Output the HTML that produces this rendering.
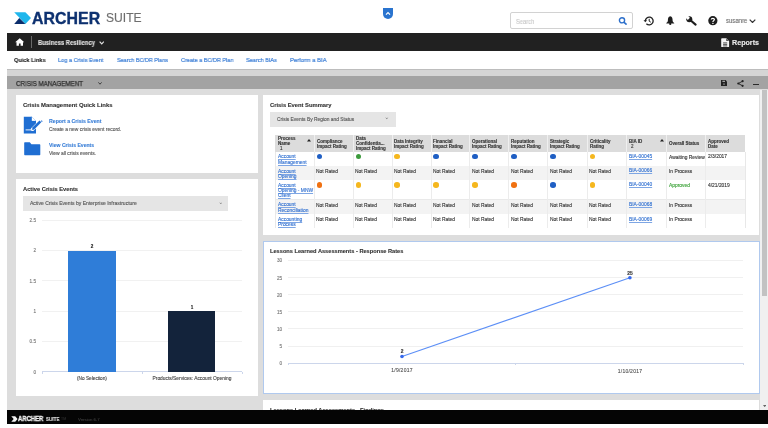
<!DOCTYPE html>
<html><head><meta charset="utf-8"><title>Archer Suite - Crisis Management</title>
<style>
html,body{margin:0;padding:0;}
body{width:768px;height:428px;overflow:hidden;position:relative;background:#fff;font-family:"Liberation Sans",sans-serif;}
.t{position:absolute;white-space:nowrap;line-height:1;will-change:transform;-webkit-text-stroke-width:0.12px;}
.r{position:absolute;}
</style></head><body>
<svg class="r" style="left:0;top:0" width="768" height="33" viewBox="0 0 768 33"><polygon points="14.2,12.2 25.4,12.2 31,18 25.4,24" fill="#1fb6ec"/><polygon points="14.2,24 25.4,24 19.3,18" fill="#0b2e6c"/></svg>
<div class="t" style="left:31.60px;top:11.07px;font-size:15.9px;color:#0d3170;font-weight:bold;letter-spacing:0.05px;-webkit-text-stroke:0.35px #0d3170;">ARCHER</div>
<div class="t" style="left:105.50px;top:12.49px;font-size:12.1px;color:#6e6e6e;">SUITE</div>
<svg class="r" style="left:383px;top:8px" width="10" height="11" viewBox="0 0 10 11"><path d="M0,0 H10 V6 A5,5 0 0 1 0,6 Z" fill="#2a74cf"/><path d="M3,6.6 L5,4.6 L7,6.6" stroke="#fff" stroke-width="1.2" fill="none"/></svg>
<div class="r" style="left:510px;top:12.3px;width:122.50px;height:16.40px;background:#fff;box-sizing:border-box;border:1px solid #d2d2d2;border-radius:2px;"></div>
<div class="t" style="left:515.50px;top:18.81px;font-size:6.4px;color:#c8c8c8;transform:scaleX(0.9);transform-origin:0 50%;">Search</div>
<svg class="r" style="left:618px;top:17px" width="10" height="8" viewBox="0 0 10 8"><circle cx="4" cy="3.3" r="2.6" stroke="#2c6fcb" stroke-width="1.4" fill="none"/><path d="M5.8,5.1 L8.6,7.6" stroke="#2c6fcb" stroke-width="1.6"/></svg>
<svg class="r" style="left:643.4px;top:15.6px" width="11" height="10" viewBox="0 0 11 10"><path d="M2.3,5 A3.9,3.9 0 1 1 3.4,7.7" stroke="#222" stroke-width="1.3" fill="none"/><path d="M0.5,4.2 L2.3,6.2 L4.1,4.2 Z" fill="#222"/><path d="M6.2,2.8 V5.2 L7.8,6.2" stroke="#222" stroke-width="1" fill="none"/></svg>
<svg class="r" style="left:666.3px;top:16.4px" width="8.5" height="9" viewBox="0 0 8.5 9"><path d="M4.25,0.3 C6.3,0.6 6.6,2.6 6.6,4.5 C6.6,5.6 7.4,6.4 8.2,7 V7.4 H0.3 V7 C1.1,6.4 1.9,5.6 1.9,4.5 C1.9,2.6 2.2,0.6 4.25,0.3 Z" fill="#1e1e1e"/><circle cx="4.25" cy="7.9" r="1.1" fill="#1e1e1e"/></svg>
<svg class="r" style="left:685.5px;top:15.6px" width="11.5" height="10" viewBox="0 0 11.5 10"><path d="M4.2,4.0 L9.6,8.6" stroke="#1e1e1e" stroke-width="2.1" stroke-linecap="round"/><circle cx="3.3" cy="3.3" r="3.0" fill="#1e1e1e"/><path d="M-0.5,1.6 L1.6,-0.5 L3.9,1.8 L1.8,3.9 Z" fill="#fff"/></svg>
<svg class="r" style="left:708.0px;top:15.9px" width="10" height="10" viewBox="0 0 10 10"><circle cx="4.85" cy="4.7" r="4.6" fill="#1e1e1e"/><path d="M3.3,3.6 C3.3,1.9 6.4,1.9 6.4,3.6 C6.4,4.6 4.9,4.7 4.9,5.9" stroke="#fff" stroke-width="1.2" fill="none"/><circle cx="4.9" cy="7.4" r="0.7" fill="#fff"/></svg>
<div class="t" style="left:726.30px;top:17.18px;font-size:7.2px;color:#666;-webkit-text-stroke:0.1px #666;transform:scaleX(0.83);transform-origin:0 50%;">susanre</div>
<svg class="r" style="left:749.3px;top:18.6px" width="7" height="4.5" viewBox="0 0 7 4.5"><path d="M0.7,0.7 L3.5,3.5 L6.3,0.7" stroke="#333" stroke-width="1.2" fill="none"/></svg>
<div class="r" style="left:7px;top:33px;width:761.00px;height:17.70px;background:#212121;"></div>
<svg class="r" style="left:14.5px;top:38px" width="9.5" height="8" viewBox="0 0 9.5 8"><path d="M4.75,0.2 L9.3,4.2 H8 V7.8 H5.6 V5.4 H3.9 V7.8 H1.5 V4.2 H0.2 Z" fill="#fff"/></svg>
<div class="r" style="left:31px;top:36px;width:1.00px;height:11.50px;background:#6a6a6a;"></div>
<div class="t" style="left:38.00px;top:40.30px;font-size:6.8px;color:#e2e2e2;font-weight:bold;transform:scaleX(0.866);transform-origin:0 50%;">Business Resiliency</div>
<svg class="r" style="left:98.5px;top:40.5px" width="5.5" height="4" viewBox="0 0 5.5 4"><path d="M0.6,0.6 L2.75,2.9 L4.9,0.6" stroke="#e2e2e2" stroke-width="1.2" fill="none"/></svg>
<svg class="r" style="left:721.3px;top:37.6px" width="8.5" height="9.5" viewBox="0 0 8.5 9.5"><path d="M1,0.2 H5.4 L8.1,2.9 V8.4 Q8.1,9.2 7.3,9.2 H1 Q0.2,9.2 0.2,8.4 V1 Q0.2,0.2 1,0.2 Z" fill="#f4f4f4"/><path d="M5.2,0.2 V3.1 H8.1 Z" fill="#555"/><path d="M2.1,4.9 H6.2 M2.1,6.4 H6.2 M2.1,7.9 H6.2" stroke="#2a2a2a" stroke-width="0.8"/></svg>
<div class="t" style="left:731.70px;top:40.11px;font-size:7.15px;color:#ebebeb;font-weight:bold;">Reports</div>
<div class="t" style="left:13.70px;top:56.92px;font-size:6.0px;color:#222;font-weight:bold;transform:scaleX(0.93);transform-origin:0 50%;">Quick Links</div>
<div class="t" style="left:58.00px;top:56.92px;font-size:6.0px;color:#3d7fd6;-webkit-text-stroke:0.2px #3d7fd6;transform:scaleX(0.93);transform-origin:0 50%;">Log a Crisis Event</div>
<div class="t" style="left:116.60px;top:56.92px;font-size:6.0px;color:#3d7fd6;-webkit-text-stroke:0.2px #3d7fd6;transform:scaleX(0.909);transform-origin:0 50%;">Search BC/DR Plans</div>
<div class="t" style="left:181.00px;top:56.92px;font-size:6.0px;color:#3d7fd6;-webkit-text-stroke:0.2px #3d7fd6;transform:scaleX(0.92);transform-origin:0 50%;">Create a BC/DR Plan</div>
<div class="t" style="left:246.40px;top:56.92px;font-size:6.0px;color:#3d7fd6;-webkit-text-stroke:0.2px #3d7fd6;transform:scaleX(0.927);transform-origin:0 50%;">Search BIAs</div>
<div class="t" style="left:290.20px;top:56.92px;font-size:6.0px;color:#3d7fd6;-webkit-text-stroke:0.2px #3d7fd6;transform:scaleX(0.969);transform-origin:0 50%;">Perform a BIA</div>
<div class="r" style="left:7px;top:69.4px;width:761.00px;height:340.60px;background:#dddddd;"></div>
<div class="r" style="left:7px;top:69.4px;width:761.00px;height:6.40px;background:#d5d5d5;"></div>
<div class="r" style="left:7px;top:69.2px;width:761.00px;height:1.00px;background:#bdbdbd;"></div>
<div class="r" style="left:7px;top:75.8px;width:761.00px;height:13.60px;background:#a3a3a3;"></div>
<div class="t" style="left:16.40px;top:80.08px;font-size:7.2px;color:#2e2e2e;-webkit-text-stroke:0.25px #2e2e2e;transform:scaleX(0.865);transform-origin:0 50%;">CRISIS MANAGEMENT</div>
<svg class="r" style="left:97.5px;top:81.8px" width="4" height="3" viewBox="0 0 4 3"><path d="M0.4,0.4 L2,2.2 L3.6,0.4" stroke="#333" stroke-width="0.9" fill="none"/></svg>
<svg class="r" style="left:721px;top:80.4px" width="6" height="6" viewBox="0 0 6 6"><path d="M0,0 H4.6 L6,1.4 V6 H0 Z" fill="#222"/><rect x="1.4" y="0.7" width="2.6" height="1.3" fill="#a3a3a3"/><rect x="2.2" y="3.4" width="1.6" height="1.4" fill="#888"/></svg>
<svg class="r" style="left:736.5px;top:80px" width="7" height="7" viewBox="0 0 7 7"><path d="M5.6,1.2 L1.3,3.5 L5.6,5.8" stroke="#222" stroke-width="0.9" fill="none"/><circle cx="5.6" cy="1.2" r="1.1" fill="#222"/><circle cx="1.3" cy="3.5" r="1.1" fill="#222"/><circle cx="5.6" cy="5.8" r="1.1" fill="#222"/></svg>
<div class="r" style="left:753px;top:83.6px;width:6.00px;height:1.10px;background:#2a2a2a;"></div>
<div class="r" style="left:759.5px;top:89.5px;width:8.50px;height:320.50px;background:#f0f0f0;"></div>
<div class="r" style="left:762px;top:89.5px;width:4.60px;height:206.50px;background:#c2c2c2;"></div>
<svg class="r" style="left:762.9px;top:404.6px" width="3.4" height="2.4" viewBox="0 0 3.4 2.4"><path d="M0,0 H3.4 L1.7,2.2 Z" fill="#666"/></svg>
<div class="r" style="left:16px;top:94.7px;width:241.70px;height:78.50px;background:#fff;"></div>
<div class="r" style="left:16px;top:178.5px;width:241.70px;height:217.70px;background:#fff;"></div>
<div class="r" style="left:263.3px;top:94.7px;width:495.90px;height:140.30px;background:#fff;"></div>
<div class="r" style="left:263px;top:240.7px;width:496.60px;height:153.60px;background:#fff;box-sizing:border-box;border:1px solid #b0c9ee;"></div>
<div class="r" style="left:263.2px;top:399.6px;width:496.00px;height:10.40px;background:#fff;"></div>
<div class="t" style="left:22.60px;top:103.16px;font-size:5.93px;color:#333;font-weight:bold;">Crisis Management Quick Links</div>
<svg class="r" style="left:22.5px;top:115.5px" width="20" height="18" viewBox="0 0 20 18"><path d="M0.8,0.7 H8.6 L13.0,5.1 V17.4 H0.8 Z" fill="#1f6ed2"/><path d="M8.6,0.7 V5.1 H13.0 Z" fill="#ffffff"/><path d="M8.4,0.7 L8.4,5.3 L13.0,5.3" fill="none" stroke="#1f6ed2" stroke-width="0.6"/><path d="M9.6,13.2 L17.6,5.2" stroke="#fff" stroke-width="3.6" stroke-linecap="round"/><path d="M9.8,13.0 L17.4,5.4" stroke="#1f6ed2" stroke-width="2.6"/><path d="M8.6,14.2 L9.0,12.4 L10.4,13.8 Z" fill="#1f6ed2"/><path d="M17.9,4.9 L18.6,4.2 L19.6,5.2 L18.9,5.9 Z" fill="#1f6ed2"/><path d="M2.6,13.9 H9.4" stroke="#fff" stroke-width="0.9"/></svg>
<div class="t" style="left:48.90px;top:119.35px;font-size:5.19px;color:#3a7fd7;font-weight:bold;">Report a Crisis Event</div>
<div class="t" style="left:48.90px;top:128.08px;font-size:4.95px;color:#555;">Create a new crisis event record.</div>
<svg class="r" style="left:24.2px;top:142.0px" width="16.5" height="13.5" viewBox="0 0 16.5 13.5"><path d="M0.8,0.2 H5.8 L7.4,2.2 H15.6 Q16.3,2.2 16.3,2.9 V12.6 Q16.3,13.3 15.6,13.3 H0.9 Q0.2,13.3 0.2,12.6 V0.9 Q0.2,0.2 0.8,0.2 Z" fill="#1f6ed2"/></svg>
<div class="t" style="left:48.90px;top:142.61px;font-size:5.08px;color:#3a7fd7;font-weight:bold;">View Crisis Events</div>
<div class="t" style="left:48.90px;top:151.77px;font-size:4.97px;color:#555;">View all crisis events.</div>
<div class="t" style="left:22.60px;top:186.87px;font-size:5.72px;color:#333;font-weight:bold;">Active Crisis Events</div>
<div class="r" style="left:22.6px;top:195.6px;width:205.60px;height:15.10px;background:#e5e5e5;"></div>
<div class="t" style="left:30.00px;top:200.72px;font-size:5.05px;color:#555;">Active Crisis Events by Enterprise Infrastructure</div>
<svg class="r" style="left:218.6px;top:201.7px" width="3.6" height="2.4" viewBox="0 0 3.6 2.4"><path d="M0.2,0.3 L1.8,2.2 L3.4,0.3 L1.8,1.2 Z" fill="#707070"/></svg>
<div class="t" style="left:-364.40px;width:400px;text-align:right;top:370.56px;font-size:4.6px;color:#777;">0</div>
<div class="r" style="left:41.6px;top:340.98px;width:200.40px;height:1.00px;background:#f1f1f1;"></div>
<div class="t" style="left:-364.40px;width:400px;text-align:right;top:340.24px;font-size:4.6px;color:#777;">0.5</div>
<div class="r" style="left:41.6px;top:310.66px;width:200.40px;height:1.00px;background:#f1f1f1;"></div>
<div class="t" style="left:-364.40px;width:400px;text-align:right;top:309.92px;font-size:4.6px;color:#777;">1</div>
<div class="r" style="left:41.6px;top:280.34000000000003px;width:200.40px;height:1.00px;background:#f1f1f1;"></div>
<div class="t" style="left:-364.40px;width:400px;text-align:right;top:279.60px;font-size:4.6px;color:#777;">1.5</div>
<div class="r" style="left:41.6px;top:250.02px;width:200.40px;height:1.00px;background:#f1f1f1;"></div>
<div class="t" style="left:-364.40px;width:400px;text-align:right;top:249.28px;font-size:4.6px;color:#777;">2</div>
<div class="r" style="left:41.6px;top:219.70000000000002px;width:200.40px;height:1.00px;background:#f1f1f1;"></div>
<div class="t" style="left:-364.40px;width:400px;text-align:right;top:218.96px;font-size:4.6px;color:#777;">2.5</div>
<div class="r" style="left:41.6px;top:371.3px;width:200.40px;height:1.00px;background:#ccd6eb;"></div>
<div class="r" style="left:41.6px;top:371.8px;width:0.80px;height:2.20px;background:#ccd6eb;"></div>
<div class="r" style="left:142.3px;top:371.8px;width:0.80px;height:2.20px;background:#ccd6eb;"></div>
<div class="r" style="left:241.5px;top:371.8px;width:0.80px;height:2.20px;background:#ccd6eb;"></div>
<div class="r" style="left:68.2px;top:250.6px;width:47.80px;height:121.20px;background:#2f7dd8;"></div>
<div class="r" style="left:168px;top:311.2px;width:47.30px;height:60.60px;background:#13233b;"></div>
<div class="t" style="left:-108.00px;width:400px;text-align:center;top:245.16px;font-size:4.6px;color:#222;font-weight:bold;">2</div>
<div class="t" style="left:-8.30px;width:400px;text-align:center;top:305.96px;font-size:4.6px;color:#222;font-weight:bold;">1</div>
<div class="t" style="left:-108.00px;width:400px;text-align:center;top:376.99px;font-size:4.73px;color:#444;">(No Selection)</div>
<div class="t" style="left:-8.00px;width:400px;text-align:center;top:377.32px;font-size:4.87px;color:#444;">Products/Services: Account Opening</div>
<div class="t" style="left:270.00px;top:103.23px;font-size:5.8px;color:#333;font-weight:bold;">Crisis Event Summary</div>
<div class="r" style="left:270px;top:111.7px;width:125.80px;height:15.10px;background:#e5e5e5;"></div>
<div class="t" style="left:277.40px;top:117.60px;font-size:4.9px;color:#555;">Crisis Events By Region and Status</div>
<svg class="r" style="left:385.3px;top:117.3px" width="3.6" height="2.4" viewBox="0 0 3.6 2.4"><path d="M0.2,0.3 L1.8,2.2 L3.4,0.3 L1.8,1.2 Z" fill="#707070"/></svg>
<div class="r" style="left:275.3px;top:134.8px;width:470.00px;height:17.00px;background:#dcdcdc;"></div>
<div class="r" style="left:275.3px;top:151.8px;width:470.00px;height:14.40px;background:#fff;"></div>
<div class="r" style="left:275.3px;top:165.7px;width:470.00px;height:1.00px;background:#e9e9e9;"></div>
<div class="r" style="left:275.3px;top:166.2px;width:470.00px;height:14.00px;background:#f3f3f3;"></div>
<div class="r" style="left:275.3px;top:179.7px;width:470.00px;height:1.00px;background:#e9e9e9;"></div>
<div class="r" style="left:275.3px;top:180.2px;width:470.00px;height:19.50px;background:#fff;"></div>
<div class="r" style="left:275.3px;top:199.2px;width:470.00px;height:1.00px;background:#e9e9e9;"></div>
<div class="r" style="left:275.3px;top:199.7px;width:470.00px;height:14.60px;background:#f3f3f3;"></div>
<div class="r" style="left:275.3px;top:213.8px;width:470.00px;height:1.00px;background:#e9e9e9;"></div>
<div class="r" style="left:275.3px;top:214.3px;width:470.00px;height:13.40px;background:#fff;"></div>
<div class="r" style="left:313.7px;top:134.8px;width:1.00px;height:17.00px;background:#efefef;"></div>
<div class="r" style="left:313.7px;top:151.8px;width:1.00px;height:75.90px;background:#ececec;"></div>
<div class="r" style="left:352.7px;top:134.8px;width:1.00px;height:17.00px;background:#efefef;"></div>
<div class="r" style="left:352.7px;top:151.8px;width:1.00px;height:75.90px;background:#ececec;"></div>
<div class="r" style="left:391.5px;top:134.8px;width:1.00px;height:17.00px;background:#efefef;"></div>
<div class="r" style="left:391.5px;top:151.8px;width:1.00px;height:75.90px;background:#ececec;"></div>
<div class="r" style="left:430.5px;top:134.8px;width:1.00px;height:17.00px;background:#efefef;"></div>
<div class="r" style="left:430.5px;top:151.8px;width:1.00px;height:75.90px;background:#ececec;"></div>
<div class="r" style="left:469.4px;top:134.8px;width:1.00px;height:17.00px;background:#efefef;"></div>
<div class="r" style="left:469.4px;top:151.8px;width:1.00px;height:75.90px;background:#ececec;"></div>
<div class="r" style="left:508.3px;top:134.8px;width:1.00px;height:17.00px;background:#efefef;"></div>
<div class="r" style="left:508.3px;top:151.8px;width:1.00px;height:75.90px;background:#ececec;"></div>
<div class="r" style="left:547.3px;top:134.8px;width:1.00px;height:17.00px;background:#efefef;"></div>
<div class="r" style="left:547.3px;top:151.8px;width:1.00px;height:75.90px;background:#ececec;"></div>
<div class="r" style="left:586.7px;top:134.8px;width:1.00px;height:17.00px;background:#efefef;"></div>
<div class="r" style="left:586.7px;top:151.8px;width:1.00px;height:75.90px;background:#ececec;"></div>
<div class="r" style="left:625.8px;top:134.8px;width:1.00px;height:17.00px;background:#efefef;"></div>
<div class="r" style="left:625.8px;top:151.8px;width:1.00px;height:75.90px;background:#ececec;"></div>
<div class="r" style="left:666.3px;top:134.8px;width:1.00px;height:17.00px;background:#efefef;"></div>
<div class="r" style="left:666.3px;top:151.8px;width:1.00px;height:75.90px;background:#ececec;"></div>
<div class="r" style="left:705.4px;top:134.8px;width:1.00px;height:17.00px;background:#efefef;"></div>
<div class="r" style="left:705.4px;top:151.8px;width:1.00px;height:75.90px;background:#ececec;"></div>
<div class="r" style="left:274.8px;top:151.8px;width:1.00px;height:75.90px;background:#e8e8e8;"></div>
<div class="r" style="left:744.8px;top:151.8px;width:1.00px;height:75.90px;background:#e8e8e8;"></div>
<div class="t" style="left:277.60px;top:137.42px;font-size:4.5px;color:#333;font-weight:bold;-webkit-text-stroke:0.12px #333;">Process</div>
<div class="t" style="left:277.60px;top:142.42px;font-size:4.5px;color:#333;font-weight:bold;-webkit-text-stroke:0.12px #333;">Name</div>
<div class="t" style="left:279.60px;top:147.42px;font-size:4.5px;color:#333;">1</div>
<div class="t" style="left:316.50px;top:139.92px;font-size:4.5px;color:#333;font-weight:bold;-webkit-text-stroke:0.12px #333;">Compliance</div>
<div class="t" style="left:316.50px;top:144.92px;font-size:4.5px;color:#333;font-weight:bold;-webkit-text-stroke:0.12px #333;">Impact Rating</div>
<div class="t" style="left:355.50px;top:137.42px;font-size:4.5px;color:#333;font-weight:bold;-webkit-text-stroke:0.12px #333;">Data</div>
<div class="t" style="left:355.50px;top:142.42px;font-size:4.5px;color:#333;font-weight:bold;-webkit-text-stroke:0.12px #333;">Confidentia...</div>
<div class="t" style="left:355.50px;top:147.42px;font-size:4.5px;color:#333;font-weight:bold;-webkit-text-stroke:0.12px #333;">Impact Rating</div>
<div class="t" style="left:394.30px;top:139.92px;font-size:4.5px;color:#333;font-weight:bold;-webkit-text-stroke:0.12px #333;">Data Integrity</div>
<div class="t" style="left:394.30px;top:144.92px;font-size:4.5px;color:#333;font-weight:bold;-webkit-text-stroke:0.12px #333;">Impact Rating</div>
<div class="t" style="left:433.30px;top:139.92px;font-size:4.5px;color:#333;font-weight:bold;-webkit-text-stroke:0.12px #333;">Financial</div>
<div class="t" style="left:433.30px;top:144.92px;font-size:4.5px;color:#333;font-weight:bold;-webkit-text-stroke:0.12px #333;">Impact Rating</div>
<div class="t" style="left:472.20px;top:139.92px;font-size:4.5px;color:#333;font-weight:bold;-webkit-text-stroke:0.12px #333;">Operational</div>
<div class="t" style="left:472.20px;top:144.92px;font-size:4.5px;color:#333;font-weight:bold;-webkit-text-stroke:0.12px #333;">Impact Rating</div>
<div class="t" style="left:511.10px;top:139.92px;font-size:4.5px;color:#333;font-weight:bold;-webkit-text-stroke:0.12px #333;">Reputation</div>
<div class="t" style="left:511.10px;top:144.92px;font-size:4.5px;color:#333;font-weight:bold;-webkit-text-stroke:0.12px #333;">Impact Rating</div>
<div class="t" style="left:550.10px;top:139.92px;font-size:4.5px;color:#333;font-weight:bold;-webkit-text-stroke:0.12px #333;">Strategic</div>
<div class="t" style="left:550.10px;top:144.92px;font-size:4.5px;color:#333;font-weight:bold;-webkit-text-stroke:0.12px #333;">Impact Rating</div>
<div class="t" style="left:589.50px;top:139.92px;font-size:4.5px;color:#333;font-weight:bold;-webkit-text-stroke:0.12px #333;">Criticality</div>
<div class="t" style="left:589.50px;top:144.92px;font-size:4.5px;color:#333;font-weight:bold;-webkit-text-stroke:0.12px #333;">Rating</div>
<div class="t" style="left:628.60px;top:139.92px;font-size:4.5px;color:#333;font-weight:bold;-webkit-text-stroke:0.12px #333;">BIA ID</div>
<div class="t" style="left:630.60px;top:144.92px;font-size:4.5px;color:#333;">2</div>
<div class="t" style="left:669.10px;top:142.42px;font-size:4.5px;color:#333;font-weight:bold;-webkit-text-stroke:0.12px #333;">Overall Status</div>
<div class="t" style="left:708.20px;top:139.92px;font-size:4.5px;color:#333;font-weight:bold;-webkit-text-stroke:0.12px #333;">Approved</div>
<div class="t" style="left:708.20px;top:144.92px;font-size:4.5px;color:#333;font-weight:bold;-webkit-text-stroke:0.12px #333;">Date</div>
<svg class="r" style="left:307.3px;top:139.3px" width="4" height="2.5" viewBox="0 0 4 2.5"><path d="M0,2.4 L2,0 L4,2.4 Z" fill="#222"/></svg>
<svg class="r" style="left:659.9px;top:139.3px" width="4" height="2.5" viewBox="0 0 4 2.5"><path d="M0,2.4 L2,0 L4,2.4 Z" fill="#222"/></svg>
<div class="t" style="left:277.60px;top:155.30px;font-size:4.9px;color:#2f6fd0;text-decoration:underline;text-decoration-thickness:0.45px;text-underline-offset:0.6px;text-decoration-color:#7ea6e4;text-decoration-skip-ink:none;">Account</div>
<div class="t" style="left:277.60px;top:160.60px;font-size:4.9px;color:#2f6fd0;text-decoration:underline;text-decoration-thickness:0.45px;text-underline-offset:0.6px;text-decoration-color:#7ea6e4;text-decoration-skip-ink:none;">Management</div>
<div class="r" style="left:316.50px;top:153.70px;width:5.6px;height:5.6px;border-radius:50%;background:#1f5fc4"></div>
<div class="r" style="left:355.50px;top:153.70px;width:5.6px;height:5.6px;border-radius:50%;background:#3c9b3c"></div>
<div class="r" style="left:394.30px;top:153.70px;width:5.6px;height:5.6px;border-radius:50%;background:#f5b71e"></div>
<div class="r" style="left:433.30px;top:153.70px;width:5.6px;height:5.6px;border-radius:50%;background:#1f5fc4"></div>
<div class="r" style="left:472.20px;top:153.70px;width:5.6px;height:5.6px;border-radius:50%;background:#1f5fc4"></div>
<div class="r" style="left:511.10px;top:153.70px;width:5.6px;height:5.6px;border-radius:50%;background:#1f5fc4"></div>
<div class="r" style="left:550.10px;top:153.70px;width:5.6px;height:5.6px;border-radius:50%;background:#1f5fc4"></div>
<div class="r" style="left:589.50px;top:153.70px;width:5.6px;height:5.6px;border-radius:50%;background:#f5b71e"></div>
<div class="t" style="left:628.60px;top:155.00px;font-size:4.9px;color:#2f6fd0;text-decoration:underline;text-decoration-thickness:0.45px;text-underline-offset:0.6px;text-decoration-color:#7ea6e4;text-decoration-skip-ink:none;">BIA-00045</div>
<div class="t" style="left:669.10px;top:155.70px;font-size:4.9px;color:#333;">Awaiting Review</div>
<div class="t" style="left:708.20px;top:155.20px;font-size:4.9px;color:#333;">2/3/2017</div>
<div class="t" style="left:277.60px;top:169.70px;font-size:4.9px;color:#2f6fd0;text-decoration:underline;text-decoration-thickness:0.45px;text-underline-offset:0.6px;text-decoration-color:#7ea6e4;text-decoration-skip-ink:none;">Account</div>
<div class="t" style="left:277.60px;top:175.00px;font-size:4.9px;color:#2f6fd0;text-decoration:underline;text-decoration-thickness:0.45px;text-underline-offset:0.6px;text-decoration-color:#7ea6e4;text-decoration-skip-ink:none;">Opening</div>
<div class="t" style="left:316.40px;top:170.00px;font-size:4.9px;color:#333;">Not Rated</div>
<div class="t" style="left:355.40px;top:170.00px;font-size:4.9px;color:#333;">Not Rated</div>
<div class="t" style="left:394.20px;top:170.00px;font-size:4.9px;color:#333;">Not Rated</div>
<div class="t" style="left:433.20px;top:170.00px;font-size:4.9px;color:#333;">Not Rated</div>
<div class="t" style="left:472.10px;top:170.00px;font-size:4.9px;color:#333;">Not Rated</div>
<div class="t" style="left:511.00px;top:170.00px;font-size:4.9px;color:#333;">Not Rated</div>
<div class="t" style="left:550.00px;top:170.00px;font-size:4.9px;color:#333;">Not Rated</div>
<div class="t" style="left:589.40px;top:170.00px;font-size:4.9px;color:#333;">Not Rated</div>
<div class="t" style="left:628.60px;top:169.40px;font-size:4.9px;color:#2f6fd0;text-decoration:underline;text-decoration-thickness:0.45px;text-underline-offset:0.6px;text-decoration-color:#7ea6e4;text-decoration-skip-ink:none;">BIA-00066</div>
<div class="t" style="left:669.10px;top:170.10px;font-size:4.9px;color:#333;">In Process</div>
<div class="t" style="left:277.60px;top:183.70px;font-size:4.9px;color:#2f6fd0;text-decoration:underline;text-decoration-thickness:0.45px;text-underline-offset:0.6px;text-decoration-color:#7ea6e4;text-decoration-skip-ink:none;">Account</div>
<div class="t" style="left:277.60px;top:189.00px;font-size:4.9px;color:#2f6fd0;text-decoration:underline;text-decoration-thickness:0.45px;text-underline-offset:0.6px;text-decoration-color:#7ea6e4;text-decoration-skip-ink:none;">Opening - MNW</div>
<div class="t" style="left:277.60px;top:194.30px;font-size:4.9px;color:#2f6fd0;text-decoration:underline;text-decoration-thickness:0.45px;text-underline-offset:0.6px;text-decoration-color:#7ea6e4;text-decoration-skip-ink:none;">Client</div>
<div class="r" style="left:316.50px;top:182.10px;width:5.6px;height:5.6px;border-radius:50%;background:#f07112"></div>
<div class="r" style="left:355.50px;top:182.10px;width:5.6px;height:5.6px;border-radius:50%;background:#f5b71e"></div>
<div class="r" style="left:394.30px;top:182.10px;width:5.6px;height:5.6px;border-radius:50%;background:#f5b71e"></div>
<div class="r" style="left:433.30px;top:182.10px;width:5.6px;height:5.6px;border-radius:50%;background:#f5b71e"></div>
<div class="r" style="left:472.20px;top:182.10px;width:5.6px;height:5.6px;border-radius:50%;background:#f5b71e"></div>
<div class="r" style="left:511.10px;top:182.10px;width:5.6px;height:5.6px;border-radius:50%;background:#f07112"></div>
<div class="r" style="left:550.10px;top:182.10px;width:5.6px;height:5.6px;border-radius:50%;background:#1f5fc4"></div>
<div class="r" style="left:589.50px;top:182.10px;width:5.6px;height:5.6px;border-radius:50%;background:#f5b71e"></div>
<div class="t" style="left:628.60px;top:183.40px;font-size:4.9px;color:#2f6fd0;text-decoration:underline;text-decoration-thickness:0.45px;text-underline-offset:0.6px;text-decoration-color:#7ea6e4;text-decoration-skip-ink:none;">BIA-00040</div>
<div class="t" style="left:669.10px;top:184.10px;font-size:4.9px;color:#3aa136;">Approved</div>
<div class="t" style="left:708.20px;top:183.60px;font-size:4.9px;color:#333;">4/21/2019</div>
<div class="t" style="left:277.60px;top:203.20px;font-size:4.9px;color:#2f6fd0;text-decoration:underline;text-decoration-thickness:0.45px;text-underline-offset:0.6px;text-decoration-color:#7ea6e4;text-decoration-skip-ink:none;">Account</div>
<div class="t" style="left:277.60px;top:208.50px;font-size:4.9px;color:#2f6fd0;text-decoration:underline;text-decoration-thickness:0.45px;text-underline-offset:0.6px;text-decoration-color:#7ea6e4;text-decoration-skip-ink:none;">Reconciliation</div>
<div class="t" style="left:316.40px;top:203.50px;font-size:4.9px;color:#333;">Not Rated</div>
<div class="t" style="left:355.40px;top:203.50px;font-size:4.9px;color:#333;">Not Rated</div>
<div class="t" style="left:394.20px;top:203.50px;font-size:4.9px;color:#333;">Not Rated</div>
<div class="t" style="left:433.20px;top:203.50px;font-size:4.9px;color:#333;">Not Rated</div>
<div class="t" style="left:472.10px;top:203.50px;font-size:4.9px;color:#333;">Not Rated</div>
<div class="t" style="left:511.00px;top:203.50px;font-size:4.9px;color:#333;">Not Rated</div>
<div class="t" style="left:550.00px;top:203.50px;font-size:4.9px;color:#333;">Not Rated</div>
<div class="t" style="left:589.40px;top:203.50px;font-size:4.9px;color:#333;">Not Rated</div>
<div class="t" style="left:628.60px;top:202.90px;font-size:4.9px;color:#2f6fd0;text-decoration:underline;text-decoration-thickness:0.45px;text-underline-offset:0.6px;text-decoration-color:#7ea6e4;text-decoration-skip-ink:none;">BIA-00068</div>
<div class="t" style="left:669.10px;top:203.60px;font-size:4.9px;color:#333;">In Process</div>
<div class="t" style="left:277.60px;top:217.80px;font-size:4.9px;color:#2f6fd0;text-decoration:underline;text-decoration-thickness:0.45px;text-underline-offset:0.6px;text-decoration-color:#7ea6e4;text-decoration-skip-ink:none;">Accounting</div>
<div class="t" style="left:277.60px;top:223.10px;font-size:4.9px;color:#2f6fd0;text-decoration:underline;text-decoration-thickness:0.45px;text-underline-offset:0.6px;text-decoration-color:#7ea6e4;text-decoration-skip-ink:none;">Process</div>
<div class="t" style="left:316.40px;top:218.10px;font-size:4.9px;color:#333;">Not Rated</div>
<div class="t" style="left:355.40px;top:218.10px;font-size:4.9px;color:#333;">Not Rated</div>
<div class="t" style="left:394.20px;top:218.10px;font-size:4.9px;color:#333;">Not Rated</div>
<div class="t" style="left:433.20px;top:218.10px;font-size:4.9px;color:#333;">Not Rated</div>
<div class="t" style="left:472.10px;top:218.10px;font-size:4.9px;color:#333;">Not Rated</div>
<div class="t" style="left:511.00px;top:218.10px;font-size:4.9px;color:#333;">Not Rated</div>
<div class="t" style="left:550.00px;top:218.10px;font-size:4.9px;color:#333;">Not Rated</div>
<div class="t" style="left:589.40px;top:218.10px;font-size:4.9px;color:#333;">Not Rated</div>
<div class="t" style="left:628.60px;top:217.50px;font-size:4.9px;color:#2f6fd0;text-decoration:underline;text-decoration-thickness:0.45px;text-underline-offset:0.6px;text-decoration-color:#7ea6e4;text-decoration-skip-ink:none;">BIA-00069</div>
<div class="t" style="left:669.10px;top:218.20px;font-size:4.9px;color:#333;">In Process</div>
<div class="t" style="left:270.30px;top:249.09px;font-size:5.67px;color:#333;font-weight:bold;">Lessons Learned Assessments - Response Rates</div>
<div class="t" style="left:-117.80px;width:400px;text-align:right;top:361.86px;font-size:4.6px;color:#777;">0</div>
<div class="r" style="left:287.8px;top:345.53333333333336px;width:455.50px;height:1.00px;background:#f0f0f0;"></div>
<div class="t" style="left:-117.80px;width:400px;text-align:right;top:344.80px;font-size:4.6px;color:#777;">5</div>
<div class="r" style="left:287.8px;top:328.4666666666667px;width:455.50px;height:1.00px;background:#f0f0f0;"></div>
<div class="t" style="left:-117.80px;width:400px;text-align:right;top:327.73px;font-size:4.6px;color:#777;">10</div>
<div class="r" style="left:287.8px;top:311.4px;width:455.50px;height:1.00px;background:#f0f0f0;"></div>
<div class="t" style="left:-117.80px;width:400px;text-align:right;top:310.66px;font-size:4.6px;color:#777;">15</div>
<div class="r" style="left:287.8px;top:294.3333333333333px;width:455.50px;height:1.00px;background:#f0f0f0;"></div>
<div class="t" style="left:-117.80px;width:400px;text-align:right;top:293.60px;font-size:4.6px;color:#777;">20</div>
<div class="r" style="left:287.8px;top:277.26666666666665px;width:455.50px;height:1.00px;background:#f0f0f0;"></div>
<div class="t" style="left:-117.80px;width:400px;text-align:right;top:276.53px;font-size:4.6px;color:#777;">25</div>
<div class="r" style="left:287.8px;top:260.2px;width:455.50px;height:1.00px;background:#f0f0f0;"></div>
<div class="t" style="left:-117.80px;width:400px;text-align:right;top:259.46px;font-size:4.6px;color:#777;">30</div>
<div class="r" style="left:287.8px;top:362.6px;width:455.50px;height:1.00px;background:#ccd6eb;"></div>
<div class="r" style="left:287.8px;top:363.1px;width:0.80px;height:2.20px;background:#ccd6eb;"></div>
<div class="r" style="left:515.2px;top:363.1px;width:0.80px;height:2.20px;background:#ccd6eb;"></div>
<div class="r" style="left:742.5px;top:363.1px;width:0.80px;height:2.20px;background:#ccd6eb;"></div>
<svg class="r" style="left:0;top:0" width="768" height="428" viewBox="0 0 768 428"><path d="M402,356.5 L629.9,277.7" stroke="#5c8ff6" stroke-width="1.1" fill="none"/><circle cx="402" cy="356.5" r="1.8" fill="#3568ec"/><circle cx="629.9" cy="277.7" r="1.8" fill="#3568ec"/></svg>
<div class="t" style="left:202.00px;width:400px;text-align:center;top:350.20px;font-size:4.9px;color:#333;font-weight:bold;">2</div>
<div class="t" style="left:429.90px;width:400px;text-align:center;top:271.90px;font-size:4.9px;color:#333;font-weight:bold;">25</div>
<div class="t" style="left:202.00px;width:400px;text-align:center;top:368.35px;font-size:5.0px;color:#555;letter-spacing:0.25px;">1/9/2017</div>
<div class="t" style="left:429.90px;width:400px;text-align:center;top:368.65px;font-size:5.0px;color:#555;letter-spacing:0.25px;">1/10/2017</div>
<div class="t" style="left:269.90px;top:408.47px;font-size:5.71px;color:#333;font-weight:bold;">Lessons Learned Assessments - Findings</div>
<div class="r" style="left:7px;top:410.2px;width:761.00px;height:14.30px;background:#050505;"></div>
<svg class="r" style="left:11px;top:415.5px" width="7" height="6" viewBox="0 0 7 6"><polygon points="0.3,0.3 4.2,0.3 6.6,3 4.2,5.7 0.3,5.7 2.7,3" fill="#f2f2f2"/></svg>
<div class="t" style="left:18.20px;top:416.36px;font-size:6.5px;color:#f2f2f2;font-weight:bold;-webkit-text-stroke:0.35px #f2f2f2;transform:scaleX(0.91);transform-origin:0 50%;">ARCHER</div>
<div class="t" style="left:45.60px;top:417.13px;font-size:5.6px;color:#dcdcdc;font-weight:bold;-webkit-text-stroke:0.2px #dcdcdc;transform:scaleX(0.82);transform-origin:0 50%;">SUITE</div>
<div class="t" style="left:61.00px;top:417.84px;font-size:3.5px;color:#2a2a2a;">TM</div>
<div class="t" style="left:78.00px;top:417.51px;font-size:4.32px;color:#3a3a3a;">Version 6.7</div>
</body></html>
